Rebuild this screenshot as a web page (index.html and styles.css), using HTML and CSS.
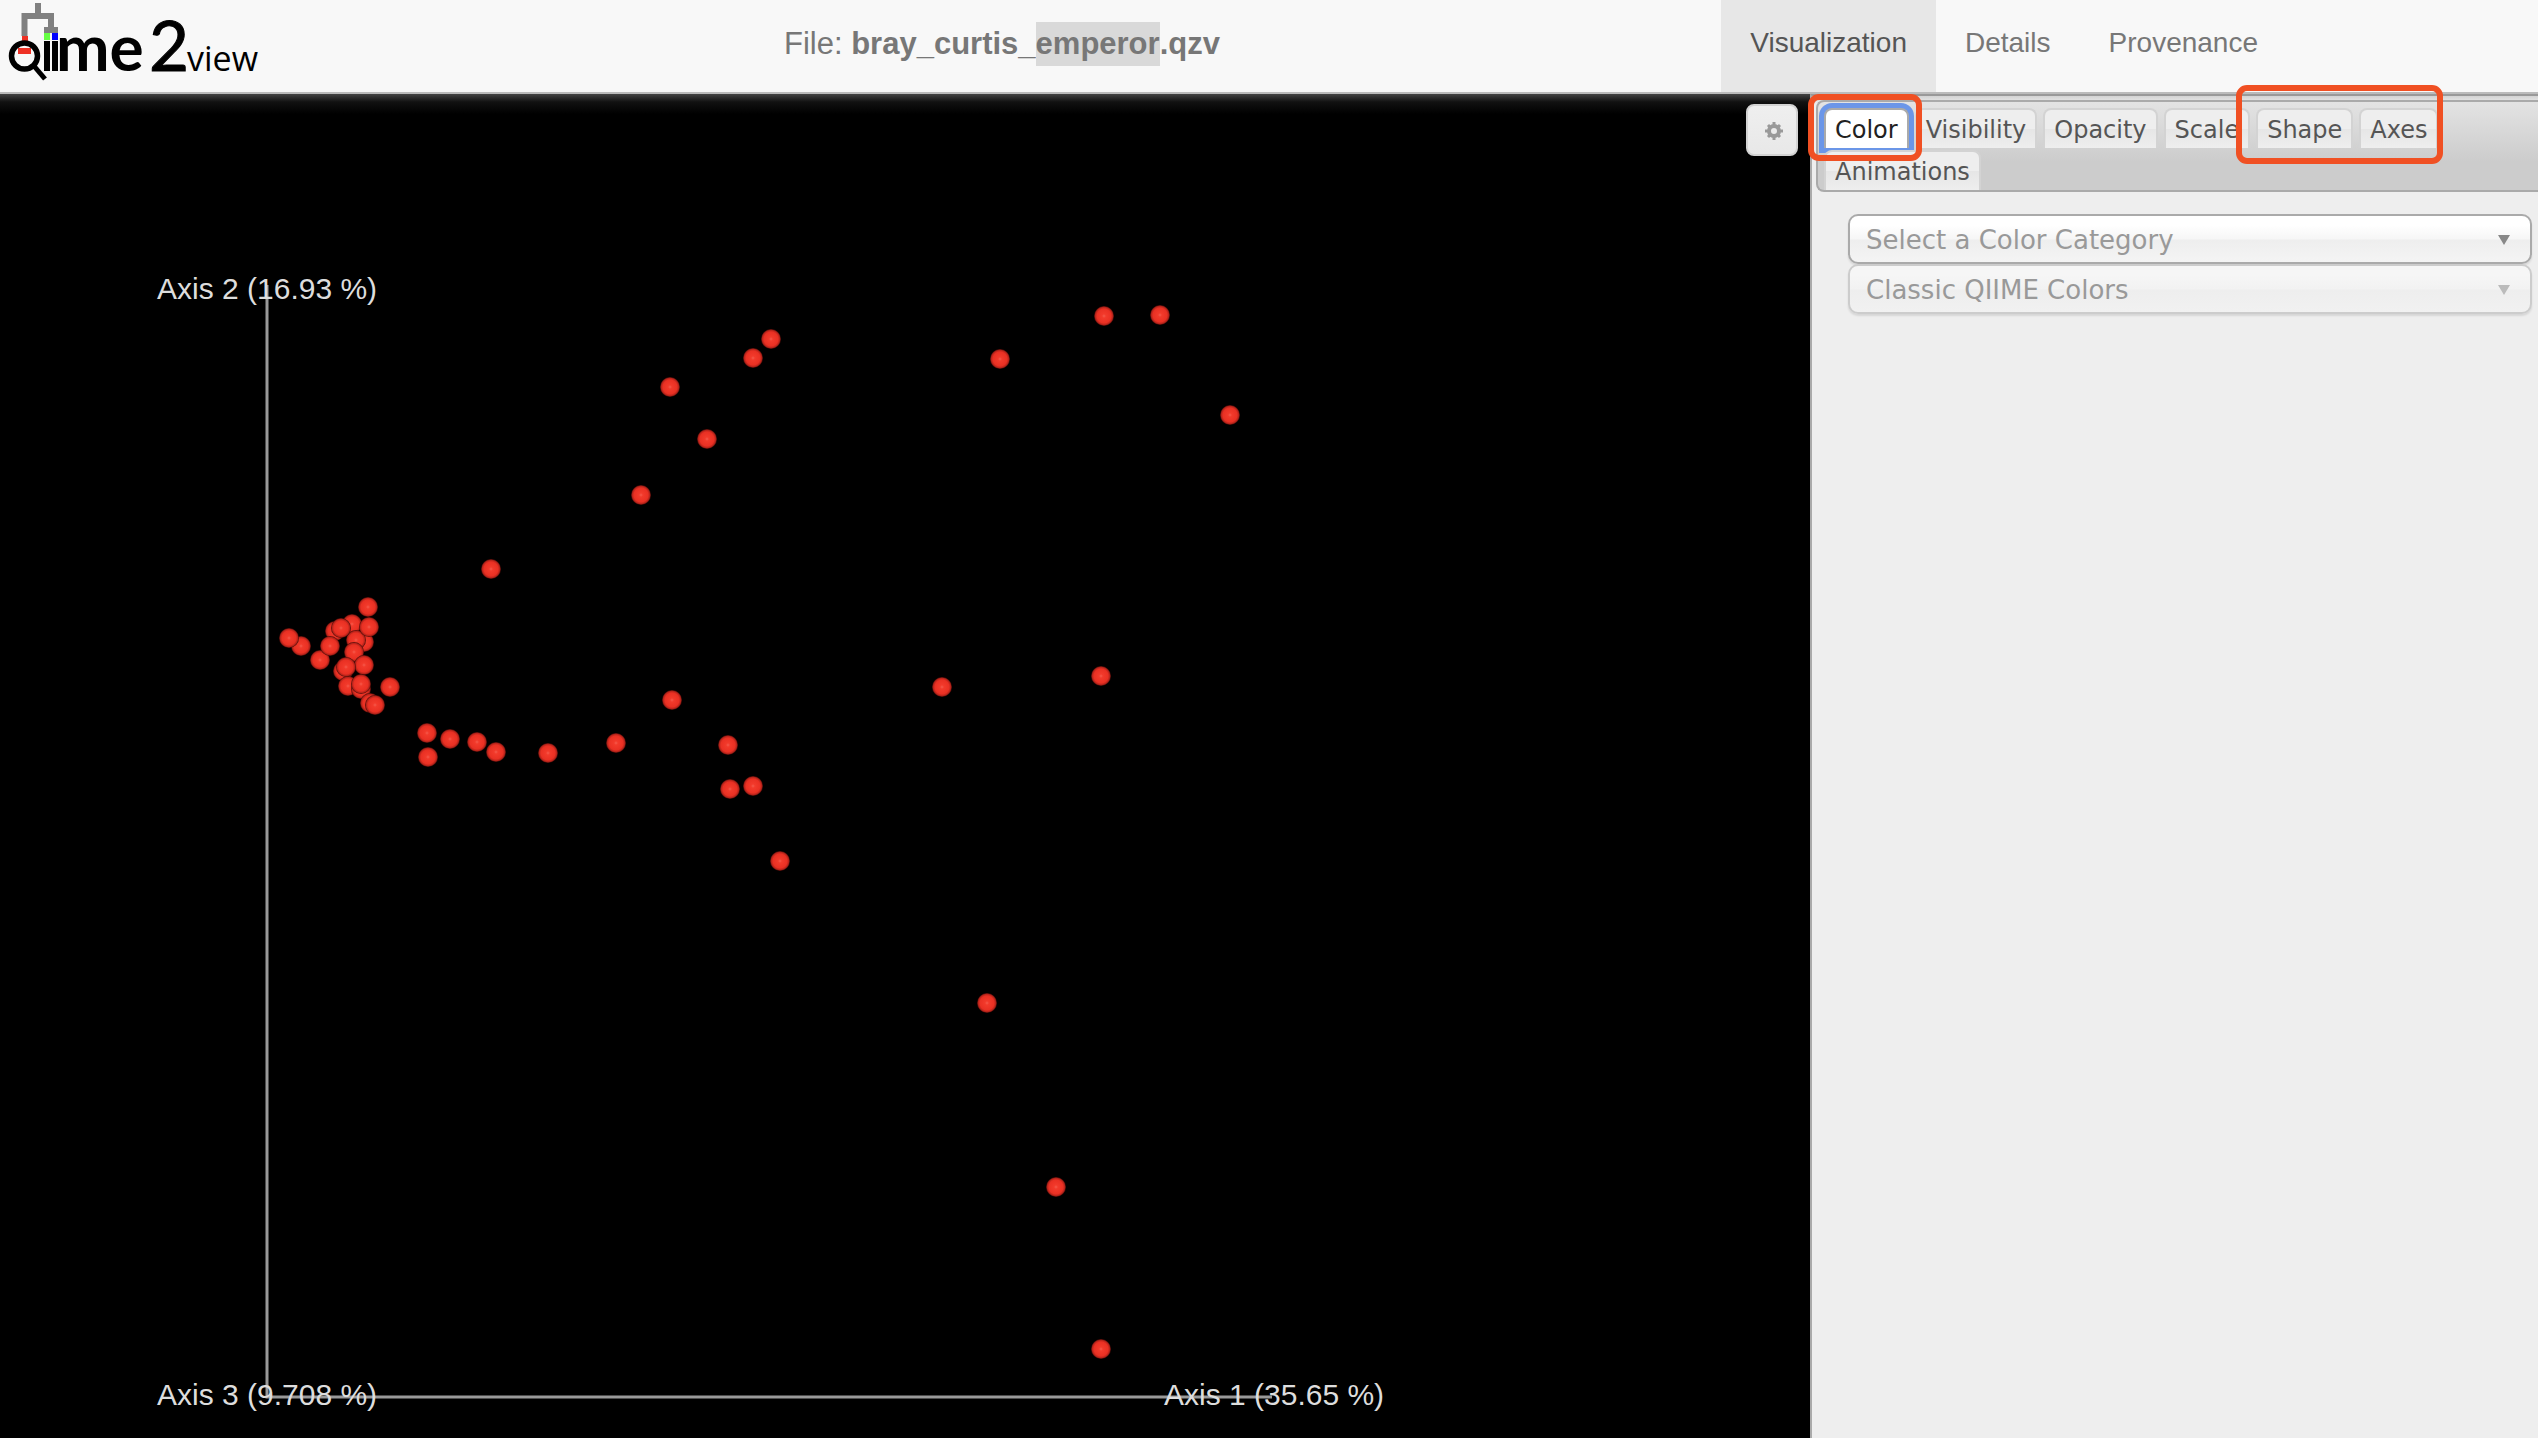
FILE: index.html
```
<!DOCTYPE html>
<html lang="en">
<head>
    <meta charset="UTF-8">
    <meta name="viewport" content="width=device-width, initial-scale=1.0">
    <title>QIIME 2 View</title>
    <link rel="stylesheet" href="styles.css">
</head>
<body>
    <header class="navbar">
        <a class="brand" href="#" aria-label="qiime2view">
            <svg width="264" height="92" viewBox="0 0 264 92">
                <!-- tree -->
                <path d="M24.500 36V16H51V28M38 16V3" fill="none" stroke="#808080" stroke-width="6"/>
                <rect x="44" y="27" width="14" height="6" fill="#808080"/>
                <rect x="22" y="36" width="6" height="8" fill="#ee3124"/>
                <rect x="44" y="33" width="6" height="7" fill="#6f4"/>
                <rect x="52" y="33" width="6" height="7" fill="#00f"/>
                <path d="M18 48H31V54H18Z" fill="#ee3124"/>
                <!-- magnifier -->
                <circle cx="24.500" cy="56" r="13" fill="none" stroke="#000" stroke-width="5.500"/>
                <path d="M34 66L45 79" stroke="#000" stroke-width="5"/>
                <rect x="44" y="41" width="6" height="30"/>
                <rect x="52" y="41" width="6" height="30"/>
                <text class="brand-name" x="56" y="71">me</text>
                <text class="brand-number" x="149" y="71">2</text>
                <text class="brand-view" x="187" y="71">view</text>
            </svg>
        </a>
        <p class="file-name">File: <strong>bray_curtis_<mark>emperor</mark>.qzv</strong></p>
        <nav class="nav">
            <a class="active" href="#">Visualization</a>
            <a href="#">Details</a>
            <a href="#">Provenance</a>
        </nav>
    </header>
    <main class="emperor">
        <section class="plot">
            <svg class="scene" viewBox="0 95 1810 1343" preserveAspectRatio="xMinYMin meet">
                <defs>
                    <radialGradient id="sphere">
                        <stop offset="0" stop-color="#f55a4c"/>
                        <stop offset="0.2" stop-color="#f23a2b"/>
                        <stop offset="0.7" stop-color="#e93023"/>
                        <stop offset="0.87" stop-color="#b5231a"/>
                        <stop offset="1" stop-color="#400805"/>
                    </radialGradient>
                </defs>
                <path class="axis" d="M267 286V1398H1272"/>
                <g class="labels">
                    <text x="157" y="300">Axis 2 (16.93 %)</text>
                    <text x="157" y="1406">Axis 3 (9.708 %)</text>
                    <text x="1164" y="1406">Axis 1 (35.65 %)</text>
                </g>
                <g fill="url(#sphere)">
                    <circle cx="335" cy="632" r="10"/>
                    <circle cx="352" cy="625" r="10"/>
                    <circle cx="364" cy="643" r="10"/>
                    <circle cx="356" cy="641" r="10"/>
                    <circle cx="343" cy="672" r="10"/>
                    <circle cx="348" cy="687" r="10"/>
                    <circle cx="361" cy="690" r="10"/>
                    <circle cx="370" cy="704" r="10"/>
                    <circle cx="301" cy="647" r="10"/>
                    <circle cx="320" cy="661" r="10"/>
                    <circle cx="330" cy="647" r="10"/>
                    <circle cx="368" cy="608" r="10"/>
                    <circle cx="369" cy="628" r="10"/>
                    <circle cx="341" cy="629" r="10"/>
                    <circle cx="354" cy="653" r="10"/>
                    <circle cx="364" cy="666" r="10"/>
                    <circle cx="346" cy="668" r="10"/>
                    <circle cx="361" cy="685" r="10"/>
                    <circle cx="375" cy="706" r="10"/>
                    <circle cx="390" cy="688" r="10"/>
                    <circle cx="289" cy="639" r="10"/>
                    <circle cx="427" cy="734" r="10"/>
                    <circle cx="428" cy="758" r="10"/>
                    <circle cx="450" cy="740" r="10"/>
                    <circle cx="477" cy="743" r="10"/>
                    <circle cx="496" cy="753" r="10"/>
                    <circle cx="548" cy="754" r="10"/>
                    <circle cx="491" cy="570" r="10"/>
                    <circle cx="670" cy="388" r="10"/>
                    <circle cx="707" cy="440" r="10"/>
                    <circle cx="641" cy="496" r="10"/>
                    <circle cx="753" cy="359" r="10"/>
                    <circle cx="771" cy="340" r="10"/>
                    <circle cx="1000" cy="360" r="10"/>
                    <circle cx="1104" cy="317" r="10"/>
                    <circle cx="1160" cy="316" r="10"/>
                    <circle cx="1230" cy="416" r="10"/>
                    <circle cx="942" cy="688" r="10"/>
                    <circle cx="1101" cy="677" r="10"/>
                    <circle cx="672" cy="701" r="10"/>
                    <circle cx="616" cy="744" r="10"/>
                    <circle cx="728" cy="746" r="10"/>
                    <circle cx="730" cy="790" r="10"/>
                    <circle cx="753" cy="787" r="10"/>
                    <circle cx="780" cy="862" r="10"/>
                    <circle cx="987" cy="1004" r="10"/>
                    <circle cx="1056" cy="1188" r="10"/>
                    <circle cx="1101" cy="1350" r="10"/>
                </g>
            </svg>
            <button class="settings" type="button" aria-label="Settings">
                <svg width="20" height="20" viewBox="-10 -10 20 20">
                    <circle r="5" fill="none" stroke="#999" stroke-width="4"/>
                    <path d="M0-9V-5M0 9V5M-9 0H-5M9 0H5M-6-6L-4-4M6-6L4-4M-6 6L-4 4M6 6L4 4" stroke="#999" stroke-width="3"/>
                </svg>
            </button>
        </section>
        <aside class="panel">
            <div class="tabs" role="tablist">
                <button class="tab selected" type="button" role="tab" aria-selected="true">Color</button>
                <button class="tab" type="button" role="tab">Visibility</button>
                <button class="tab" type="button" role="tab">Opacity</button>
                <button class="tab" type="button" role="tab">Scale</button>
                <button class="tab" type="button" role="tab">Shape</button>
                <button class="tab" type="button" role="tab">Axes</button>
                <button class="tab" type="button" role="tab">Animations</button>
                <span class="callout callout-color"></span>
                <span class="callout callout-shape"></span>
            </div>
            <div class="options">
                <div class="dropdown">
                    <select aria-label="Color category">
                        <option>Select a Color Category</option>
                    </select>
                </div>
                <div class="dropdown disabled">
                    <select aria-label="Colormap" disabled>
                        <option>Classic QIIME Colors</option>
                    </select>
                </div>
            </div>
        </aside>
    </main>
</body>
</html>
```
FILE: styles.css
```
* {
    box-sizing: border-box;
}
body {
    margin: 0;
    min-height: 100vh;
    display: flex;
    flex-direction: column;
    background-color: #eee;
    font-family: "Liberation Sans", Arial, sans-serif;
}

/* top bar */
.navbar {
    display: flex;
    align-items: stretch;
    height: 94px;
    padding-right: 251px;
    background-color: #f8f8f8;
    border-bottom: 2px solid #bbb;
}
.brand {
    display: block;
    height: 92px;
}
.brand svg {
    display: block;
}
.brand-name {
    font: bold 64px Lato, sans-serif;
}
.brand-number {
    font: 69px Lato, sans-serif;
    stroke: #000;
    stroke-width: 1;
}
.brand-view {
    font: 34px "Open Sans", sans-serif;
}
.file-name {
    flex: 1;
    margin: 0;
    padding: 0 0 4px 520px;
    align-self: center;
    color: #777;
    font-size: 31px;
    line-height: 44px;
    white-space: nowrap;
}
.file-name mark {
    display: inline-block;
    background-color: #d9d9d9;
    color: inherit;
}
.nav {
    display: flex;
}
.nav a {
    padding: 0 29px 6px;
    color: #777;
    font-size: 28px;
    line-height: 86px;
    text-decoration: none;
}
.nav .active {
    color: #555;
    background-color: #e7e7e7;
}

/* plot on the left, controls on the right */
.emperor {
    flex: 1;
    display: grid;
    grid-template-columns: minmax(0, 1fr) 728px;
}
.plot {
    position: relative;
    background: linear-gradient(#444, #111 8px, #000 20px);
}
.scene {
    display: block;
    width: 100%;
}
.axis {
    fill: none;
    stroke: #999;
    stroke-width: 3;
}
.labels {
    fill: #ddd;
    font-size: 30px;
}
.settings {
    position: absolute;
    top: 10px;
    right: 12px;
    display: flex;
    align-items: center;
    justify-content: center;
    width: 52px;
    height: 52px;
    padding: 2px 0 0 4px;
    border: 2px solid #d3d3d3;
    border-radius: 8px;
    background: linear-gradient(#efefef, #e8e8e8);
}

.panel {
    border-top: 2px solid #999;
    border-left: 2px solid #aaa;
    padding: 4px 0 0 4px;
    background: linear-gradient(#d3d3d3, #eee 8px);
    font-family: Verdana, "DejaVu Sans", sans-serif;
}
.tabs {
    position: relative;
    display: flex;
    flex-wrap: wrap;
    gap: 2px 6px;
    padding: 6px 6px 0;
    border: 2px solid #aaa;
    border-right: 0;
    border-radius: 8px 0 0 8px;
    background: linear-gradient(#e3e3e3, #ccc 60px);
}
.tab {
    height: 40px;
    padding: 2px 9px 0;
    border: 2px solid #d3d3d3;
    border-bottom: 0;
    border-radius: 8px 8px 0 0;
    background: linear-gradient(#eee 50%, #e6e6e6 50%, #eee);
    color: #555;
    font-family: inherit;
    font-size: 24px;
    line-height: 36px;
}
.tab.selected {
    border-color: #aaa;
    background: #fff;
    color: #212121;
    box-shadow: 0 0 0 5px #6b96e8;
}
.callout {
    position: absolute;
    border: 6px solid #f05023;
    border-radius: 11px;
}
.callout-color {
    top: -8px;
    left: -10px;
    width: 114px;
    height: 67px;
}
.callout-shape {
    top: -17px;
    left: 418px;
    width: 207px;
    height: 79px;
}

.options {
    padding: 22px 6px 0 32px;
}
.dropdown {
    position: relative;
}
.dropdown select {
    appearance: none;
    display: block;
    width: 100%;
    height: 50px;
    padding: 2px 40px 0 16px;
    border: 2px solid #aaa;
    border-radius: 10px;
    background: linear-gradient(#fff 20%, #f6f6f6 50%, #eee 52%, #f4f4f4);
    box-shadow: 0 2px 2px rgba(0, 0, 0, 0.1);
    color: #999;
    font-family: inherit;
    font-size: 26px;
}
.dropdown::after {
    content: "";
    position: absolute;
    top: 21px;
    right: 22px;
    border: 6px solid transparent;
    border-top: 10px solid #888;
    border-bottom: 0;
    pointer-events: none;
}
.dropdown.disabled select {
    border-color: #ccc;
    background: linear-gradient(#f6f6f6 20%, #f2f2f2 50%, #eee 52%, #f1f1f1);
    opacity: 1;
}
.dropdown.disabled::after {
    border-top-color: #bbb;
}
```
